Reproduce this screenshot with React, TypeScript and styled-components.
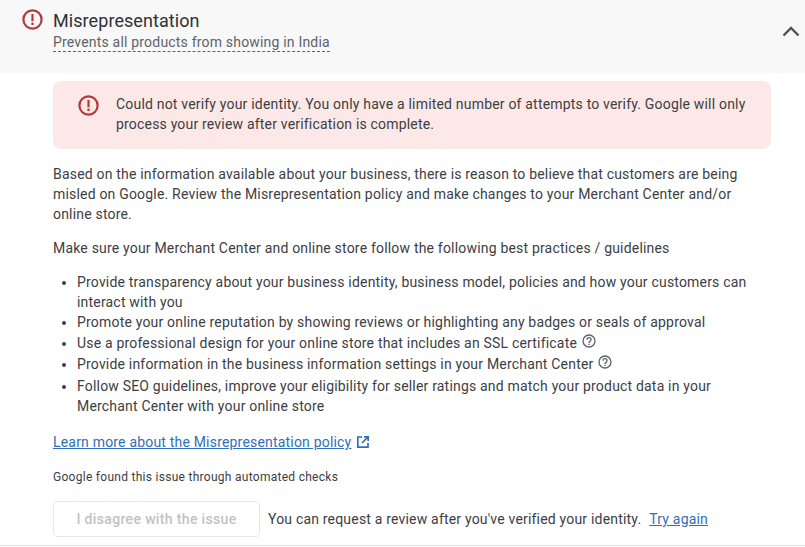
import React from "react";
import styled, { createGlobalStyle } from "styled-components";

const Global = createGlobalStyle`
  html, body { margin: 0; padding: 0; background: #fff; }
  body { font-family: Roboto, "Liberation Sans", sans-serif; color: #3c4043; width: 805px; height: 547px; overflow: hidden; }
`;

const Panel = styled.div`
  width: 805px;
  height: 545px;
  border-bottom: 1px solid #e0e0e0;
`;

const Header = styled.header`
  height: 73px;
  background: #f8f8f8;
  display: flex;
  align-items: flex-start;
  padding: 9px 0 0 22px;
  box-sizing: border-box;
`;

const HeaderIcon = styled.div`
  width: 21px;
  height: 21px;
  margin-right: 10px;
  flex: none;
`;

const HeaderText = styled.div`
  flex: 1;
  display: flex;
  flex-direction: column;
  align-items: flex-start;
`;

const Title = styled.div`
  font-size: 18px;
  line-height: 24px;
  letter-spacing: 0.07px;
  color: #303134;
`;

const Subtitle = styled.div`
  font-size: 14px;
  line-height: 18px;
  letter-spacing: 0.19px;
  color: #5f6368;
  border-bottom: 1px dashed #5f6368;
`;

const Chevron = styled.div`
  width: 24px;
  height: 24px;
  margin: 10px 2px 0 0;
  flex: none;
  color: #4f5256;
`;

const Body = styled.div`
  padding: 8px 34px 0 53px;
`;

const Alert = styled.div`
  height: 68px;
  background: #fce8e6;
  border-radius: 8px;
  display: flex;
  padding: 13px 24px 0 25px;
  box-sizing: border-box;
`;

const AlertIcon = styled.div`
  width: 21px;
  height: 21px;
  margin: 1px 17px 0 0;
  flex: none;
`;

const AlertText = styled.div`
  font-size: 14px;
  line-height: 20px;
  letter-spacing: 0.19px;
`;

const Para = styled.p<{ $top: number }>`
  margin: ${(p) => p.$top}px 0 0;
  font-size: 14px;
  line-height: 20px;
  letter-spacing: 0.19px;
`;

const List = styled.ul`
  margin: 14px 0 0;
  padding: 0 0 0 24px;
  font-size: 14px;
  line-height: 20px;
  letter-spacing: 0.19px;
`;

const Item = styled.li<{ $before?: number; $after?: number }>`
  margin-top: ${(p) => p.$before ?? 0}px;
  margin-bottom: ${(p) => p.$after ?? 0}px;
`;

const Help = styled.svg`
  width: 16px;
  height: 16px;
  margin-left: 4px;
  vertical-align: -1px;
  color: #5f6368;
`;

const LearnRow = styled.div`
  margin-top: 16px;
  font-size: 14px;
  line-height: 20px;
  letter-spacing: 0.19px;
  display: flex;
  align-items: center;
  gap: 5px;
`;

const Link = styled.a`
  color: #2f6fbb;
  text-decoration: underline;
`;

const Found = styled.div`
  margin-top: 17px;
  font-size: 12px;
  line-height: 16px;
  letter-spacing: 0.28px;
`;

const ActionRow = styled.div`
  margin-top: 16px;
  display: flex;
  align-items: center;
  font-size: 14px;
  letter-spacing: 0.19px;
`;

const Disagree = styled.button`
  width: 207px;
  height: 36px;
  box-sizing: border-box;
  background: #fff;
  border: 1px solid #e8e8e8;
  border-radius: 4px;
  color: #c2c2c2;
  font: 500 14px Roboto, sans-serif;
  letter-spacing: 0.35px;
  padding: 0;
  margin-right: 8px;
`;

const TryAgain = styled(Link)`
  margin-left: 8px;
`;

const ErrorIcon = () => (
  <svg viewBox="0 0 21 21" width="100%" height="100%">
    <circle cx="10.5" cy="10.5" r="9.1" fill="none" stroke="#b3383a" strokeWidth="2.2" />
    <rect x="9.4" y="5" width="2.2" height="7.2" rx="0.5" fill="#b3383a" />
    <rect x="9.4" y="13.6" width="2.2" height="2.3" rx="0.5" fill="#b3383a" />
  </svg>
);

const HelpIcon = () => (
  <Help viewBox="0 0 24 24" fill="currentColor">
    <path d="M12 2a10 10 0 1 0 0 20 10 10 0 0 0 0-20zm0 18a8 8 0 1 1 0-16 8 8 0 0 1 0 16zm-1-4h2v2h-2v-2zm1-10a4 4 0 0 0-4 4h2a2 2 0 1 1 4 0c0 2-3 1.75-3 5h2c0-2.25 3-2.5 3-5a4 4 0 0 0-4-4z" />
  </Help>
);

export default function App() {
  return (
    <>
      <Global />
      <Panel>
        <Header>
          <HeaderIcon><ErrorIcon /></HeaderIcon>
          <HeaderText>
            <Title>Misrepresentation</Title>
            <Subtitle>Prevents all products from showing in India</Subtitle>
          </HeaderText>
          <Chevron>
            <svg viewBox="0 0 24 24" width="24" height="24" fill="none" stroke="currentColor" strokeWidth="2.4">
              <path d="M4.5 16.5l7.5-7.5 7.5 7.5" />
            </svg>
          </Chevron>
        </Header>
        <Body>
          <Alert>
            <AlertIcon><ErrorIcon /></AlertIcon>
            <AlertText>
              Could not verify your identity. You only have a limited number of attempts to verify. Google will only process your review after verification is complete.
            </AlertText>
          </Alert>
          <Para $top={15}>
            Based on the information available about your business, there is reason to believe that customers are being misled on Google. Review the Misrepresentation policy and make changes to your Merchant Center and/or online store.
          </Para>
          <Para $top={14}>
            Make sure your Merchant Center and online store follow the following best practices / guidelines
          </Para>
          <List>
            <Item>Provide transparency about your business identity, business model, policies and how your customers can interact with you</Item>
            <Item>Promote your online reputation by showing reviews or highlighting any badges or seals of approval</Item>
            <Item $before={1}>Use a professional design for your online store that includes an SSL certificate<HelpIcon /></Item>
            <Item $before={1} $after={2}>Provide information in the business information settings in your Merchant Center<HelpIcon /></Item>
            <Item>Follow SEO guidelines, improve your eligibility for seller ratings and match your product data in your Merchant Center with your online store</Item>
          </List>
          <LearnRow>
            <Link>Learn more about the Misrepresentation policy</Link>
            <svg viewBox="0 0 14 14" width="14" height="14" fill="none" stroke="#2f6fbb" strokeWidth="1.7">
              <path d="M6 2H1.8v10.2H12V8M8 1.8h4.2V6M12 2L6 8" />
            </svg>
          </LearnRow>
          <Found>Google found this issue through automated checks</Found>
          <ActionRow>
            <Disagree disabled>I disagree with the issue</Disagree>
            You can request a review after you've verified your identity.
            <TryAgain>Try again</TryAgain>
          </ActionRow>
        </Body>
      </Panel>
    </>
  );
}
